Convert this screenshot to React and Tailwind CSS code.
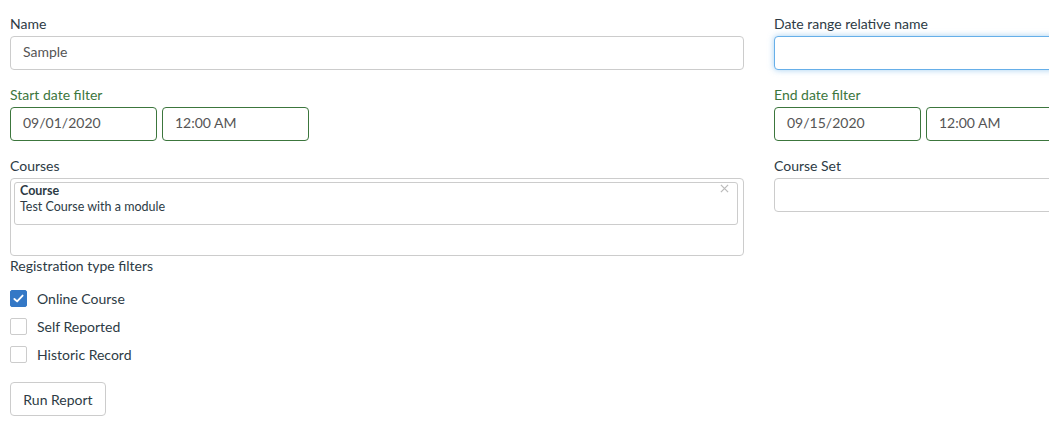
import React from 'react';

const Label = ({ children, green }) => (
  <div className={`h-[18px] leading-[18px] text-[14px] mb-[3px] ${green ? 'text-[#3c763d]' : 'text-[#2d3b45]'}`}>
    {children}
  </div>
);

const TextBox = ({ value, focused, green, className = '' }) => (
  <div
    className={`h-[34px] rounded-[4px] border px-[12px] pb-[3px] flex items-center text-[14px] text-[#555] bg-white ${
      focused
        ? 'border-[#66afe9] shadow-[0_0_6px_rgba(102,175,233,0.6)]'
        : green
        ? 'border-[#3c763d]'
        : 'border-[#ccc]'
    } ${className}`}
  >
    {value}
  </div>
);

const Checkbox = ({ checked, label }) => (
  <div className="h-[28px] flex items-center">
    <div
      className={`w-[17px] h-[17px] rounded-[2px] border flex items-center justify-center ${
        checked ? 'bg-[#3478c6] border-[#3478c6]' : 'bg-white border-[#ccc]'
      }`}
    >
      {checked && (
        <svg viewBox="0 0 12 12" className="w-[11px] h-[11px]">
          <path d="M1.5 6.5 L4.5 9.2 L10.5 2.8" fill="none" stroke="white" strokeWidth="2" strokeLinecap="round" strokeLinejoin="round" />
        </svg>
      )}
    </div>
    <span className="ml-[10px] text-[14px] text-[#2d3b45]">{label}</span>
  </div>
);

export default function App() {
  return (
    <div className="w-[1049px] h-[423px] overflow-hidden bg-white font-['Lato','Liberation_Sans',sans-serif]">
      <div className="flex gap-[30px] pt-[15px] pl-[10px]">
        {/* left column */}
        <div className="w-[734px] shrink-0">
          <Label>Name</Label>
          <TextBox value="Sample" />

          <div className="mt-[16px]">
            <Label green>Start date filter</Label>
            <div className="flex gap-[5px]">
              <TextBox value="09/01/2020" green className="w-[147px]" />
              <TextBox value="12:00 AM" green className="w-[147px]" />
            </div>
          </div>

          <div className="mt-[16px]">
            <Label>Courses</Label>
            <div className="h-[78px] rounded-[4px] border border-[#ccc] pt-[3px] pl-[3px] pr-[5px]">
              <div className="relative h-[43px] rounded-[3px] border border-[#ccc] px-[5px] text-[12.5px] leading-[16px] text-[#2d3b45]">
                <div className="font-bold">Course</div>
                <div>Test Course with a module</div>
                <svg viewBox="0 0 10 10" className="absolute right-[8px] top-[1px] w-[9px] h-[9px]">
                  <path d="M1 1 L9 9 M9 1 L1 9" stroke="#bbb" strokeWidth="1.4" fill="none" />
                </svg>
              </div>
            </div>
          </div>

          <div className="mt-[1px] h-[18px] leading-[18px] text-[14px] text-[#2d3b45]">Registration type filters</div>

          <div className="mt-[9px]">
            <Checkbox checked label="Online Course" />
            <Checkbox label="Self Reported" />
            <Checkbox label="Historic Record" />
          </div>

          <button className="mt-[14px] block h-[34px] w-[96px] rounded-[4px] border border-[#ccc] bg-white text-[14px] text-[#2d3b45]">
            Run Report
          </button>
        </div>

        {/* right column */}
        <div className="w-[734px] shrink-0">
          <Label>Date range relative name</Label>
          <TextBox value="" focused />

          <div className="mt-[16px]">
            <Label green>End date filter</Label>
            <div className="flex gap-[5px]">
              <TextBox value="09/15/2020" green className="w-[147px]" />
              <TextBox value="12:00 AM" green className="w-[147px]" />
            </div>
          </div>

          <div className="mt-[16px]">
            <Label>Course Set</Label>
            <TextBox value="" />
          </div>
        </div>
      </div>
    </div>
  );
}
